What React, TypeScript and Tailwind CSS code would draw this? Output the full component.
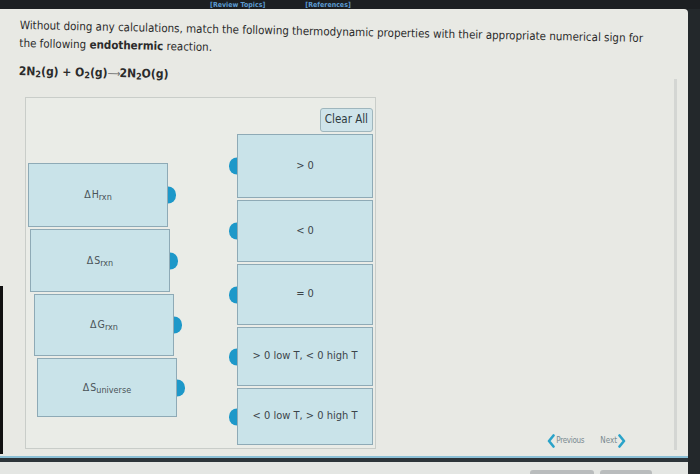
import React from 'react'

const leftItems = [
  { sym: 'H', sub: 'rxn', h: 'h-[64px]', ml: 'ml-0' },
  { sym: 'S', sub: 'rxn', h: 'h-[63px]', ml: 'ml-[2px]' },
  { sym: 'G', sub: 'rxn', h: 'h-[62px]', ml: 'ml-[6px]' },
  { sym: 'S', sub: 'universe', h: 'h-[59px]', ml: 'ml-[9px]' },
]

const rightItems = [
  { t: '> 0', h: 'h-[64px]' },
  { t: '< 0', h: 'h-[62px]' },
  { t: '= 0', h: 'h-[61px]' },
  { t: '> 0 low T, < 0 high T', h: 'h-[59px]' },
  { t: '< 0 low T, > 0 high T', h: 'h-[57px]' },
]

function Dot({ side }: { side: 'left' | 'right' }) {
  return (
    <span
      className={
        side === 'right'
          ? 'absolute -right-[9px] top-1/2 -translate-y-1/2 w-[8px] h-[17px] rounded-r-full bg-[#1d98c9]'
          : 'absolute -left-[9px] top-1/2 -translate-y-1/2 w-[8px] h-[17px] rounded-l-full bg-[#1d98c9]'
      }
    />
  )
}

function Chevron({ dir }: { dir: 'left' | 'right' }) {
  return (
    <svg width="8" height="14" viewBox="0 0 8 14" fill="none" stroke="#2aa3c9" strokeWidth="2.6" strokeLinecap="round" strokeLinejoin="round">
      {dir === 'left' ? <path d="M6.5 1.5 2 7l4.5 5.5" /> : <path d="M1.5 1.5 6 7l-4.5 5.5" />}
    </svg>
  )
}

export default function App() {
  return (
    <div
      className="w-[700px] h-[474px] overflow-hidden bg-[#1c1f22] flex flex-col text-[#2b2b2b]"
      style={{ fontFamily: '"DejaVu Sans Condensed", "DejaVu Sans", sans-serif' }}
    >
      <div className="h-[9px] flex items-center gap-[40px] pl-[210px] shrink-0">
        <span className="text-[7px] leading-[8px] font-bold text-[#5b9bd1]">[Review Topics]</span>
        <span className="text-[7px] leading-[8px] font-bold text-[#5b9bd1]">[References]</span>
      </div>

      <div className="flex-1 flex">
        <div className="flex-1 flex flex-col">
          <div className="flex-1 bg-[#e8e9e4] rounded-tr-[4px] flex">
            <div className="w-[4px] flex flex-col justify-end pb-[2px]">
              <div className="h-[168px] w-[3px] bg-[#111]" />
            </div>
            <div className="flex-1 flex flex-col pl-[16px] pr-[8px] pt-[7px]">
              <div className="rotate-[1.2deg] origin-top-left">
                <p className="w-[632px] text-[11.5px] leading-[18px]">
                  Without doing any calculations, match the following thermodynamic properties with their appropriate numerical sign for the following <b>endothermic</b> reaction.
                </p>
                <p className="mt-[10px] text-[12px] font-bold">
                  2N<sub className="text-[9px]">2</sub>(g) + O<sub className="text-[9px]">2</sub>(g)
                  <span className="font-normal text-[10px] text-[#666] tracking-[-1px]">⟶</span>2N<sub className="text-[9px]">2</sub>O(g)
                </p>
              </div>

              <div className="mt-[17px] flex items-end">
                <div className="ml-[5px] w-[351px] h-[352px] border border-[#c9cdc9] bg-[#eaece7] px-[2px] pt-[10px] flex flex-col">
                  <div className="flex justify-end">
                    <button className="px-[4px] h-[24px] rounded-[3px] border border-[#9fb6bd] bg-[#cfe4ea] text-[11.5px] text-[#2e3a3e]">
                      Clear All
                    </button>
                  </div>
                  <div className="flex justify-between">
                    <div className="w-[149px] flex flex-col gap-[2px] pt-[31px]">
                      {leftItems.map((it, i) => (
                        <div
                          key={i}
                          className={`relative w-[140px] ${it.h} ${it.ml} border border-[#8eaab6] bg-[#c9e3e9] flex items-center justify-center text-[10.5px] text-[#4a5358]`}
                        >
                          <span>
                            <span className="mr-[1px]">Δ</span>
                            {it.sym}
                            <sub className="text-[9px]">{it.sub}</sub>
                          </span>
                          <Dot side="right" />
                        </div>
                      ))}
                    </div>
                    <div className="w-[136px] flex flex-col gap-[2px] mt-[2px]">
                      {rightItems.map((it, i) => (
                        <div
                          key={i}
                          className={`relative ${it.h} border border-[#8eaab6] bg-[#c9e3e9] flex items-center justify-center text-[11px] text-[#3c4549]`}
                        >
                          {it.t}
                          <Dot side="left" />
                        </div>
                      ))}
                    </div>
                  </div>
                </div>
                <div className="flex-1 flex justify-end pr-[40px] gap-[16px] pb-[1px]">
                  <span className="flex items-center gap-[1px] text-[8px] text-[#7a8a90] tracking-[-0.3px]">
                    <Chevron dir="left" />
                    Previous
                  </span>
                  <span className="flex items-center gap-[1px] text-[8px] text-[#7a8a90]">
                    Next
                    <Chevron dir="right" />
                  </span>
                </div>
              </div>
            </div>
            <div className="w-[14px] flex flex-col pt-[70px] pb-[6px]">
              <div className="w-[3px] flex-1 bg-[#d4d6d3]" />
            </div>
          </div>
          <div className="h-[2px] bg-[#8cc0d6]" />
          <div className="h-[4px] bg-[#2c3439]" />
          <div className="h-[12px] bg-[#e4e6e3] flex items-end gap-[6px] pl-[530px]">
            <div className="w-[64px] h-[4px] rounded-t-[3px] bg-[#b9bcbd]" />
            <div className="w-[52px] h-[4px] rounded-t-[3px] bg-[#b9bcbd]" />
          </div>
        </div>
        <div className="w-[12px] bg-[#23282b]" />
      </div>
    </div>
  )
}
